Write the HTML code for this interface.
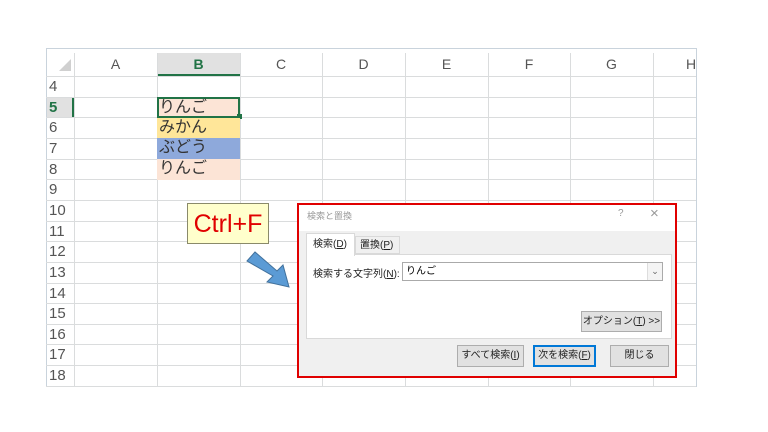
<!DOCTYPE html>
<html><head><meta charset="utf-8"><style>
*{margin:0;padding:0;box-sizing:border-box}
body{width:768px;height:432px;background:#fff;position:relative;overflow:hidden;font-family:"Liberation Sans","Noto Sans CJK JP",sans-serif}
.a{position:absolute}
.hl{position:absolute;height:1px;background:#dadcdd;left:46px;width:650px}
.vl{position:absolute;width:1px;background:#dadcdd;top:53px;height:333px}
.ch{position:absolute;top:53px;height:23px;line-height:23px;text-align:center;font-size:14px;color:#555}
.rn{position:absolute;left:47px;width:27px;font-size:15px;color:#555;padding-left:2px;height:20.6px;line-height:22px}
.cell{position:absolute;left:157px;width:83px;height:20.6px;font-size:16px;line-height:20px;padding-left:2px;color:#333}
.btn{position:absolute;height:22px;background:#e1e1e1;border:1px solid #adadad;font-size:10px;text-align:center;line-height:20px;color:#222}
.d{font-size:10px;color:#222}
</style></head><body>
<div class="a" style="left:46px;top:48px;width:651px;height:339px;border:1px solid #c9d3dc"></div>
<div class="a" style="left:157px;top:53px;width:83px;height:23px;background:#e1e1e1;border-bottom:2px solid #217346"></div>
<div class="a" style="left:47px;top:97px;width:27px;height:21px;background:#e1e1e1;border-right:2px solid #217346"></div>
<svg class="a" style="left:58px;top:58px" width="14" height="14"><path d="M13 1V13H1Z" fill="#d0d0d0"/></svg>
<div class="ch" style="left:74px;width:83px">A</div>
<div class="ch" style="left:157px;width:83px;color:#217346;font-weight:bold">B</div>
<div class="ch" style="left:240px;width:82px">C</div>
<div class="ch" style="left:322px;width:83px">D</div>
<div class="ch" style="left:405px;width:83px">E</div>
<div class="ch" style="left:488px;width:82px">F</div>
<div class="ch" style="left:570px;width:83px">G</div>
<div class="ch" style="left:686px;width:20px;text-align:left">H</div>
<div class="vl" style="left:74px"></div><div class="vl" style="left:157px"></div><div class="vl" style="left:240px"></div><div class="vl" style="left:322px"></div><div class="vl" style="left:405px"></div><div class="vl" style="left:488px"></div><div class="vl" style="left:570px"></div><div class="vl" style="left:653px"></div>
<div class="hl" style="top:76px"></div>
<div id="rows"></div>
<script>
var s='';for(var i=0;i<15;i++){var t=76+i*20.65;s+='<div class="hl" style="top:'+(t+20.65).toFixed(1)+'px"></div><div class="rn" style="top:'+t.toFixed(1)+'px'+(i==1?';color:#217346;font-weight:bold':'')+'">'+(i+4)+'</div>';}
document.getElementById('rows').innerHTML=s;
</script>
<div class="cell" style="top:97px;background:#fce4d6;border:2px solid #217346;line-height:17px;padding-left:0">りんご</div>
<div class="a" style="left:237px;top:114px;width:5px;height:5px;background:#217346"></div>
<div class="cell" style="top:117.6px;background:#ffe699">みかん</div>
<div class="cell" style="top:138.3px;background:#8ea9db">ぶどう</div>
<div class="cell" style="top:159px;background:#fce4d6">りんご</div>
<div class="a" style="left:187px;top:203px;width:82px;height:41px;background:#ffffcc;border:1px solid #8a8a6a;color:#e00000;font-size:25px;text-align:center;line-height:40px">Ctrl+F</div>
<svg class="a" style="left:240px;top:250px" width="60" height="45"><path d="M7 11 L15 2 L37 21 L43 15 L49 37 L27 32 L33 26 Z" fill="#5b9bd5" stroke="#41719c" stroke-width="1"/></svg>
<div class="a" style="left:297px;top:203px;width:380px;height:175px;border:2px solid #e00000;background:#f0f0f0"></div>
<div class="a" style="left:299px;top:205px;width:376px;height:26px;background:#fff"></div>
<div class="a d" style="left:307px;top:209px;color:#999;font-size:9px">検索と置換</div>
<div class="a" style="left:618px;top:208px;color:#999;font-size:10px">?</div>
<div class="a" style="left:650px;top:205px;color:#999;font-size:15px">×</div>
<div class="a" style="left:306px;top:254px;width:366px;height:85px;background:#fff;border:1px solid #d9d9d9"></div>
<div class="a d" style="left:306px;top:233px;width:49px;height:23px;background:#fff;border:1px solid #d9d9d9;border-bottom:none;line-height:21px;padding-left:6px">検索(<u>D</u>)</div>
<div class="a d" style="left:355px;top:236px;width:45px;height:18px;background:#f0f0f0;border:1px solid #d9d9d9;line-height:17px;padding-left:4px">置換(<u>P</u>)</div>
<div class="a d" style="left:313px;top:265px">検索する文字列(<u>N</u>):</div>
<div class="a" style="left:402px;top:262px;width:261px;height:19px;border:1px solid #aaa;background:#fff;font-size:10px;line-height:17px;padding-left:3px">りんご</div>
<div class="a" style="left:647px;top:263px;width:15px;height:17px;border-left:1px solid #ddd;background:#f4f4f4;font-size:9px;color:#666;text-align:center;line-height:16px">⌄</div>
<div class="btn" style="left:581px;top:311px;width:81px;height:21px">オプション(<u>T</u>) &gt;&gt;</div>
<div class="btn" style="left:457px;top:345px;width:67px">すべて検索(<u>I</u>)</div>
<div class="btn" style="left:533px;top:345px;width:63px;border:2px solid #0078d7;line-height:18px">次を検索(<u>F</u>)</div>
<div class="btn" style="left:610px;top:345px;width:59px">閉じる</div>
</body></html>
